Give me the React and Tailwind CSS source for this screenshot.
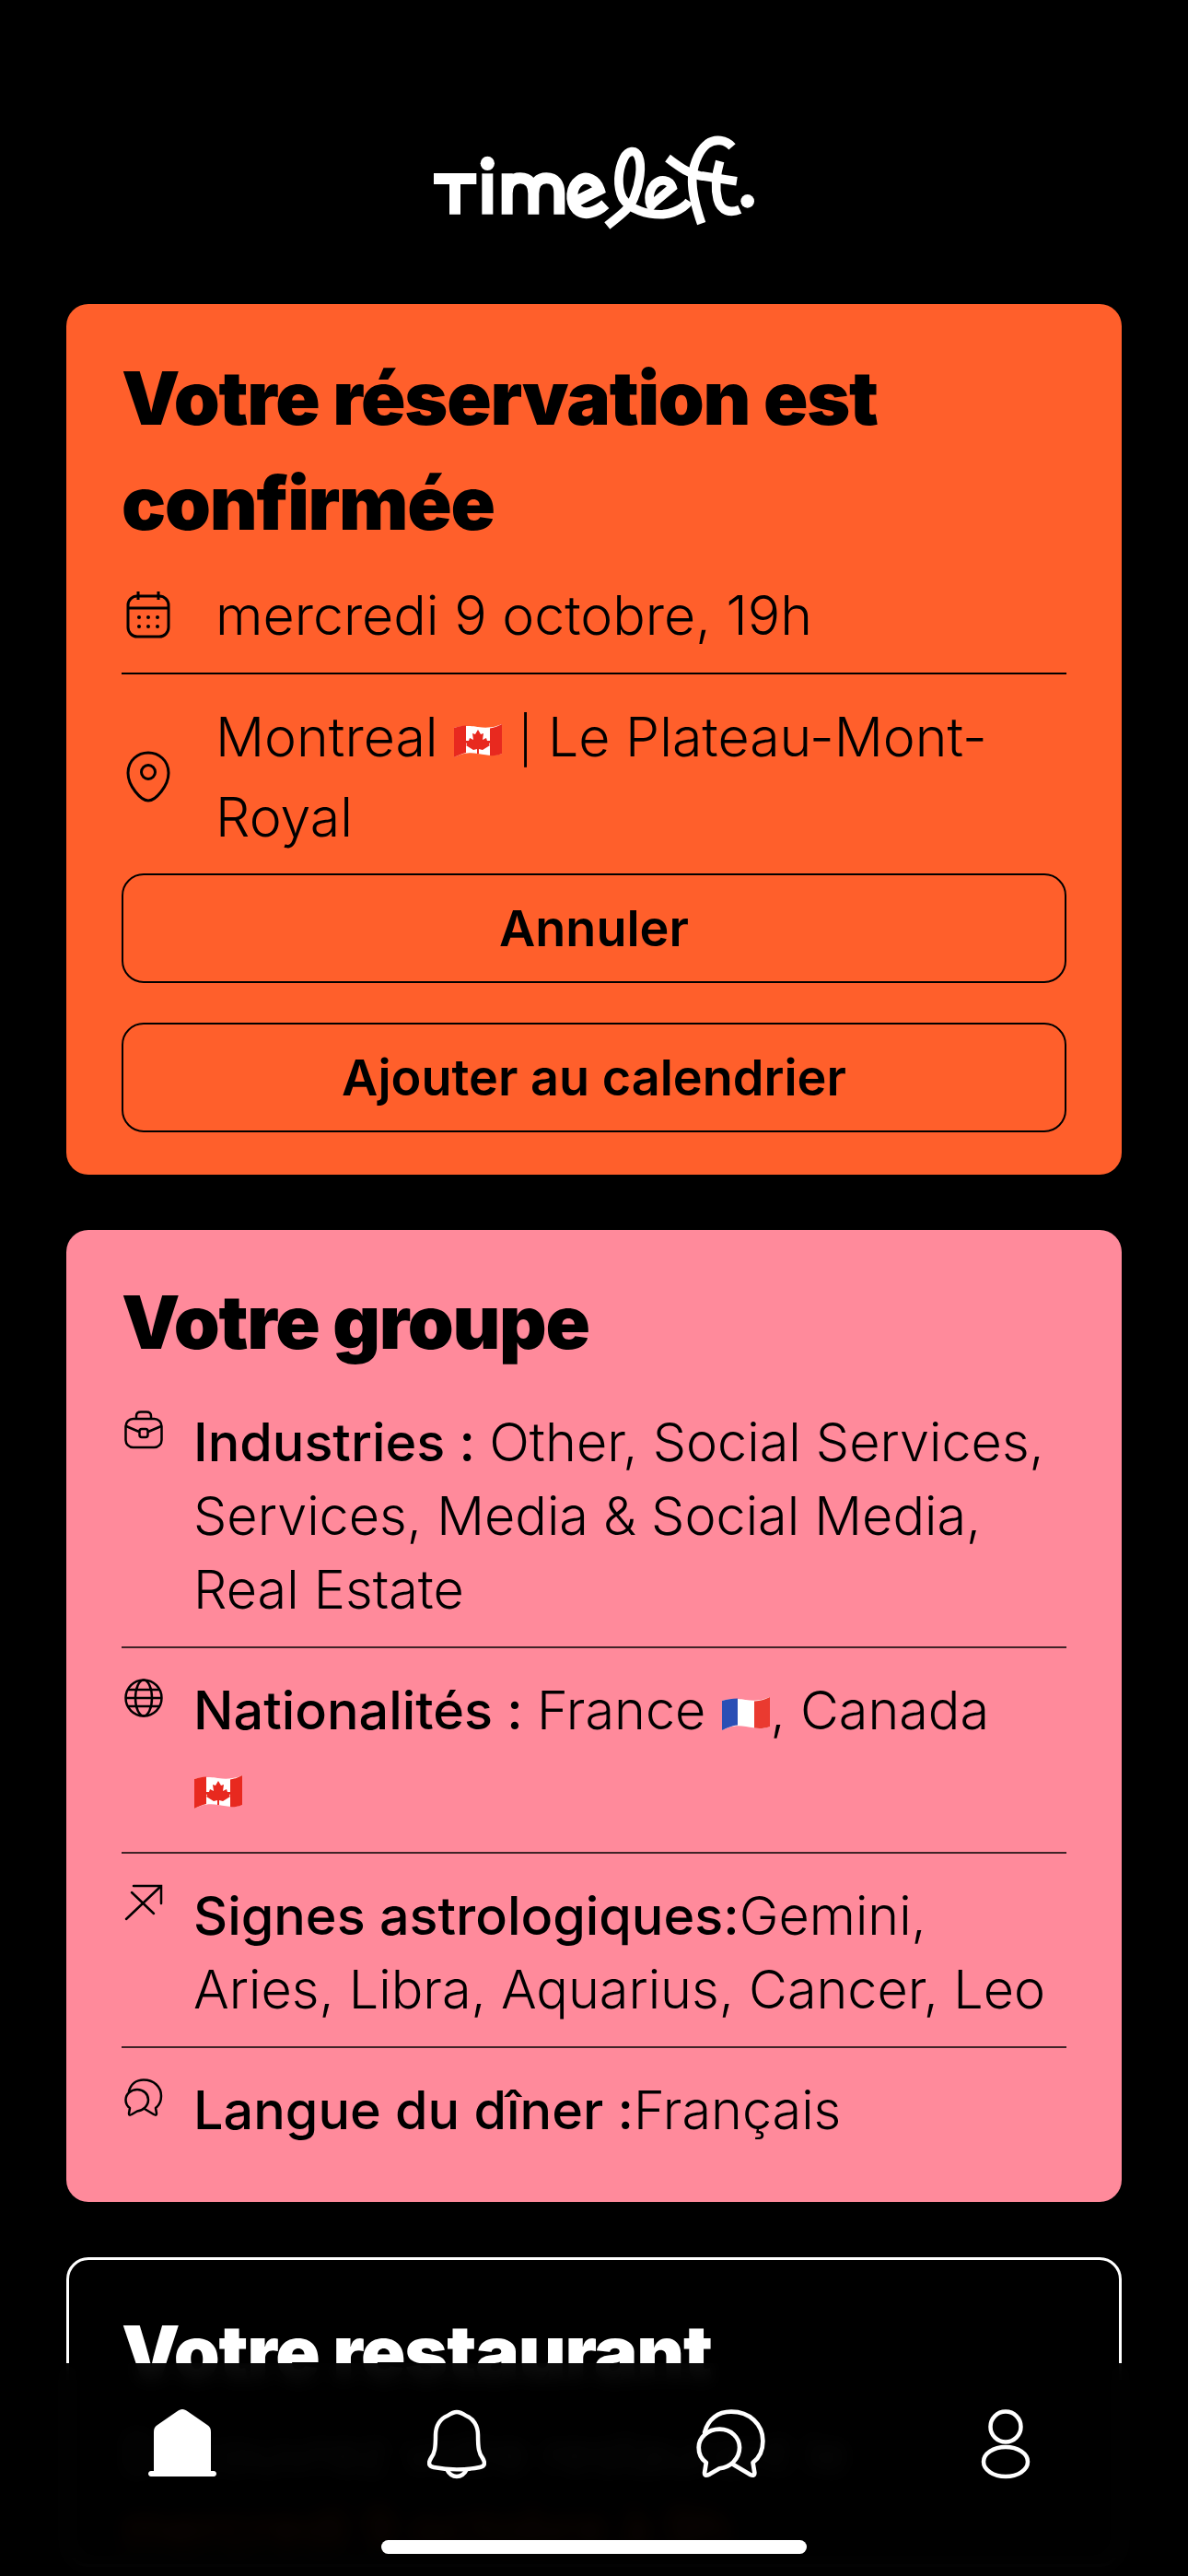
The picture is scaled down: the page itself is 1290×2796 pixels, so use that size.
import React from 'react';

const Logo = () => (
  <svg width="490" height="150" viewBox="0 0 1470 450" fill="none" stroke="white" strokeWidth="36">
    <path d="M213 222 H352 M282 222 V338" />
    <path d="M388 205 V338" />
    <circle cx="388" cy="172" r="23" fill="white" stroke="none" />
    <path d="M452 205 V338 M452 270 C452 235 470 220 495 220 C525 220 538 240 538 270 V338 M538 270 C538 235 556 220 580 220 C610 220 622 240 622 270 V338" />
    <path d="M672 298 L752 258 C742 225 710 212 688 228 C660 248 655 295 680 322 C705 345 745 330 772 305" />
    <g transform="translate(720 60)" strokeWidth="29">
      <path d="M58 315 C95 285 130 262 145 225 C165 175 172 120 160 90 C150 65 125 70 112 95 C92 135 90 190 108 225 C130 262 190 280 240 278 C300 272 325 235 325 235" />
      <path d="M205 245 L270 190 C262 165 232 160 212 180 C190 205 190 245 210 262" />
      <path d="M255 95 C290 120 320 145 360 152 L480 170" />
      <path d="M465 58 C445 35 410 30 385 48 C350 75 335 130 335 170 C335 210 345 250 365 308" />
      <path d="M425 105 C412 150 408 190 418 230 C428 268 460 275 490 262" />
      <circle cx="515" cy="235" r="22" fill="white" stroke="none" />
    </g>
  </svg>
);

const CalendarIcon = () => (
  <svg className="ml-[5px] shrink-0 w-[48px] h-[52px]" viewBox="0 0 48 52" fill="none" stroke="black" strokeWidth="3">
    <rect x="2" y="6" width="44" height="44" rx="10" />
    <path d="M2 19 H46 M13 1 V10 M35 1 V10" />
    <g fill="black" stroke="none">
      <circle cx="14" cy="29" r="2" /><circle cx="24" cy="29" r="2" /><circle cx="34" cy="29" r="2" />
      <circle cx="14" cy="39" r="2" /><circle cx="24" cy="39" r="2" /><circle cx="34" cy="39" r="2" />
    </g>
  </svg>
);

const PinIcon = () => (
  <svg className="ml-[5px] shrink-0 w-[48px] h-[56px]" viewBox="0 0 48 56" fill="none" stroke="black" strokeWidth="3">
    <path d="M24 2 C35 2 46 10 46 24 C46 38 32 54 24 54 C16 54 2 38 2 24 C2 10 13 2 24 2 Z" />
    <circle cx="24" cy="23" r="7.5" />
  </svg>
);

const BriefcaseIcon = () => (
  <svg className="shrink-0 w-[42px] h-[42px]" viewBox="0 0 42 42" fill="none" stroke="black" strokeWidth="2.5">
    <rect x="1.5" y="9" width="39" height="31" rx="8" />
    <path d="M13 9 V6 C13 3 15 1.5 18 1.5 H24 C27 1.5 29 3 29 6 V9" />
    <path d="M2 17 L16 23 M26 23 L40 17" />
    <rect x="16.5" y="20" width="9" height="9" rx="2.5" />
  </svg>
);

const GlobeIcon = () => (
  <svg className="shrink-0 w-[42px] h-[42px]" viewBox="0 0 42 42" fill="none" stroke="black" strokeWidth="2.5">
    <circle cx="21" cy="21" r="19.5" />
    <ellipse cx="21" cy="21" rx="9" ry="19.5" />
    <path d="M4 12 H38 M4 30 H38 M1.5 21 H40.5" />
  </svg>
);

const ArrowIcon = () => (
  <svg className="shrink-0 w-[42px] h-[42px]" viewBox="0 0 42 42" fill="none" stroke="black" strokeWidth="2.5" strokeLinecap="round">
    <path d="M2 38 L40 2 M10 2 H40 V21 M8 9 L32 32" />
  </svg>
);

const ChatIcon = ({ stroke = 'black', width = 2.5, cls = 'w-[42px] h-[42px]' }) => (
  <svg className={'shrink-0 ' + cls} viewBox="0 0 42 42" fill="none" stroke={stroke} strokeWidth={width} strokeLinecap="round" strokeLinejoin="round">
    <path d="M5 14 C7 6 13 1.5 21 1.5 C32 1.5 40 9 40 19 C40 25 38 29 34 32 L35 38 C35 40 34 40 32 39 L22 33" />
    <path d="M14 12 C7 12 1.5 17 1.5 23 C1.5 27 3 30 6 32 L5 38 C5 40 6 40 8 39 L14 35.5 C20 35 26 30 26 23 C26 17 21 12 14 12 Z" />
  </svg>
);

const CanadaFlag = () => (
  <svg className="inline-block align-[-2px] w-[54px] h-[38px]" viewBox="0 0 54 38">
    <path d="M1 5 C14 1 27 4 27 4 C40 6 48 3 53 1 V33 C44 36 38 35 27 33 C14 31 8 34 1 37 Z" fill="white" />
    <path d="M1 5 C6 3.5 10 2.6 14 2.4 V32 C9 33 5 35 1 37 Z" fill="#e8291f" />
    <path d="M40 5.4 C45 5 49 3 53 1 V33 C48 35 44 35.5 40 35 Z" fill="#e8291f" />
    <path d="M27 7 L30 12 L33 11 L32 18 L36 16 L37 19 L41 19 L39 23 L40 24 L32 29 L28 28 V33 H26 V28 L22 29 L14 24 L15 23 L13 19 L17 19 L18 16 L22 18 L21 11 L24 12 Z" fill="#e8291f" />
  </svg>
);

const FranceFlag = () => (
  <svg className="inline-block align-[-2px] w-[54px] h-[38px]" viewBox="0 0 54 38">
    <path d="M1 5 C14 1 27 4 27 4 C40 6 48 3 53 1 V33 C44 36 38 35 27 33 C14 31 8 34 1 37 Z" fill="white" />
    <path d="M1 5 C6 3.5 12 2.6 18 2.6 V31.5 C11 32 6 35 1 37 Z" fill="#2b4fb5" />
    <path d="M36 5.4 C43 5.4 49 3 53 1 V33 C47 35 42 35.5 36 34.6 Z" fill="#ea3a30" />
  </svg>
);

const HomeIcon = () => (
  <svg width="74" height="74" viewBox="0 0 74 74" fill="white">
    <path d="M37 0 C39 0 41 1 43 2.5 L64 17 C67 19 68 21 68 25 V67 H71 C75 67 75 73 71 73 H3 C-1 73 -1 67 3 67 H6 V25 C6 21 7 19 10 17 L31 2.5 C33 1 35 0 37 0 Z" />
  </svg>
);

const BellIcon = () => (
  <svg width="64" height="76" viewBox="0 0 64 76" fill="none" stroke="white" strokeWidth="4.5" strokeLinejoin="round">
    <path d="M32 3 C36 3 39 5 42 7 C50 10 55 18 55 28 C55 42 56 48 60 53 C63 58 63 62 57 63 C42 66 22 66 7 63 C1 62 1 58 4 53 C8 48 9 42 9 28 C9 18 14 10 22 7 C25 5 28 3 32 3 Z" />
    <path d="M21 65 C24 71 28 73 32 73 C36 73 40 71 43 65" />
  </svg>
);

const UserIcon = () => (
  <svg width="54" height="76" viewBox="0 0 54 76" fill="none" stroke="white" strokeWidth="4.5">
    <circle cx="27" cy="19" r="16.5" />
    <ellipse cx="27" cy="57" rx="24" ry="16" />
  </svg>
);

const Row = ({ icon, children, last }) => (
  <div className={'flex gap-[36px] ' + (last ? '' : 'border-b-2 border-black/75 pb-[22px]')}>
    <div className="pl-[3px] pt-[6px]">{icon}</div>
    <div className="flex-1 -ml-[3px] text-[57.5px] leading-[80px] font-light">{children}</div>
  </div>
);

const App = () => {
  return (
    <div className="relative h-[2796px] overflow-hidden bg-black font-['Inter',sans-serif] text-black">
      <div className="flex h-[330px] justify-center pt-[120px]">
        <Logo />
      </div>

      <div className="flex flex-col gap-[60px] px-[72px]">
        <section className="rounded-[24px] bg-[#ff5f2b] px-[60px] pb-[46px] pt-[45px]">
          <h1 className="text-[80px] leading-[114px] font-black tracking-[-1.25px]">
            Votre réservation est confirmée
          </h1>
          <div className="flex h-[129px] items-center gap-[49px] border-b-2 border-black">
            <CalendarIcon />
            <span className="pt-[4px] text-[59px] font-light">mercredi 9 octobre, 19h</span>
          </div>
          <div className="flex items-center gap-[49px] pt-[26px]">
            <PinIcon />
            <p className="flex-1 text-[59px] leading-[83px] font-light">
              Montreal <CanadaFlag /> <span className="text-[50px]">|</span> Le Plateau-Mont-Royal
            </p>
          </div>
          <button className="mt-[20px] block h-[119px] w-full rounded-[24px] border-2 border-black text-[54px] font-semibold">
            Annuler
          </button>
          <button className="mt-[43px] block h-[119px] w-full rounded-[24px] border-2 border-black text-[54px] font-semibold">
            Ajouter au calendrier
          </button>
        </section>

        <section className="rounded-[24px] bg-[#ff8a9b] px-[60px] pb-[60px] pt-[50px]">
          <h2 className="mb-[40px] text-[80px] leading-[100px] font-black tracking-[-1.25px]">
            Votre groupe
          </h2>
          <div className="flex flex-col gap-[27px]">
            <Row icon={<BriefcaseIcon />}>
              <b className="font-medium">Industries : </b>Other, Social Services,<br />
              Services, Media &amp; Social Media,<br />
              Real Estate
            </Row>
            <Row icon={<GlobeIcon />}>
              <b className="font-medium">Nationalités : </b>France <FranceFlag />, Canada
              <div className="flex h-[92px] items-center pt-[6px]"><CanadaFlag /></div>
            </Row>
            <Row icon={<ArrowIcon />}>
              <b className="font-medium">Signes astrologiques:</b>Gemini,<br />
              Aries, Libra, Aquarius, Cancer, Leo
            </Row>
            <Row icon={<ChatIcon />} last>
              <b className="font-medium">Langue du dîner :</b>Français
            </Row>
          </div>
        </section>

        <section className="rounded-[24px] border-[3px] border-white px-[57px] pt-[50px] text-white">
          <h2 className="text-[80px] leading-[100px] font-black tracking-[-1.25px]">
            Votre restaurant
          </h2>
          <p className="mt-[20px] text-[57.5px] leading-[80px] font-light">
            Découvrez votre restaurant le<br />
            <span className="font-semibold text-[#ff5f2b]">mercredi 9 octobre à 9h</span>
          </p>
        </section>
      </div>

      <nav className="absolute inset-x-0 bottom-0 h-[231px] bg-black/95 backdrop-blur-[10px]">
        <div className="grid grid-cols-4 px-[49px] pt-[50px]">
          <div className="flex justify-center"><HomeIcon /></div>
          <div className="flex justify-center"><BellIcon /></div>
          <div className="flex justify-center"><ChatIcon stroke="white" width="2.6" cls="w-[76px] h-[76px]" /></div>
          <div className="flex justify-center"><UserIcon /></div>
        </div>
        <div className="absolute bottom-[24px] left-[414px] h-[15px] w-[462px] rounded-full bg-white" />
      </nav>
    </div>
  );
};

export default App;
